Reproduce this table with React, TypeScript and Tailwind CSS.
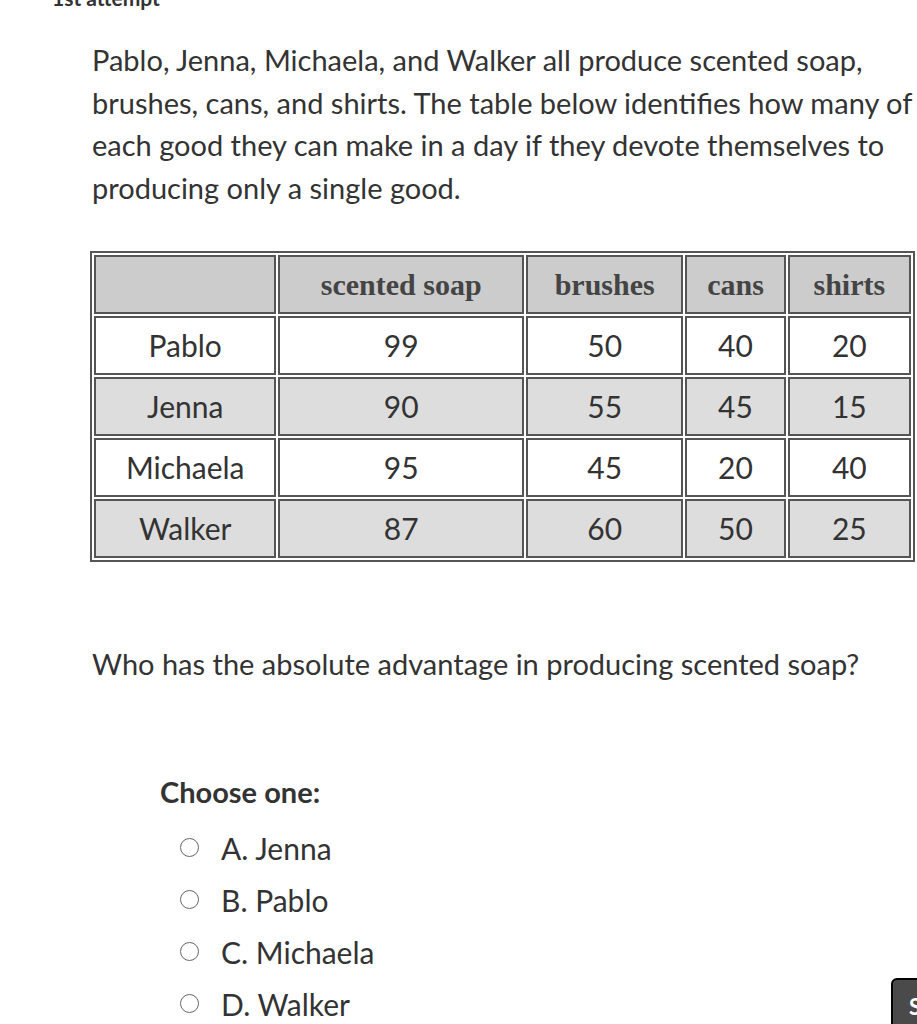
const headers = ["scented soap", "brushes", "cans", "shirts"];
const widths = ["w-[182px]", "w-[245px]", "w-[157px]", "w-[100px]", "w-[123px]"];

const rows: [string, number[]][] = [
  ["Pablo", [99, 50, 40, 20]],
  ["Jenna", [90, 55, 45, 15]],
  ["Michaela", [95, 45, 20, 40]],
  ["Walker", [87, 60, 50, 25]],
];

const options = ["A. Jenna", "B. Pablo", "C. Michaela", "D. Walker"];

export default function App() {
  return (
    <div className="relative w-[917px] h-[1024px] overflow-hidden bg-white text-[#333] font-['Lato','Liberation_Sans',sans-serif]">
      <div className="mt-[-16px] pl-[52px] text-[21px] leading-[28px] font-bold whitespace-nowrap">
        1st attempt
      </div>

      <p className="mt-[27px] ml-[92px] w-[850px] text-[29px] leading-[42.5px]">
        Pablo, Jenna, Michaela, and Walker all produce scented soap, brushes,
        cans, and shirts. The table below identifies how many of each good they
        can make in a day if they devote themselves to producing only a single
        good.
      </p>

      <table className="mt-[42px] ml-[90px] w-[825px] table-fixed border-separate border-spacing-[2px] border-2 border-[#555]">
        <thead>
          <tr>
            <th className={`${widths[0]} h-[59px] bg-[#ccc] border-2 border-[#555]`}></th>
            {headers.map((h, i) => (
              <th
                key={h}
                className={`${widths[i + 1]} h-[59px] bg-[#ccc] border-2 border-[#555] text-[30px] font-bold text-[#444] font-['Liberation_Serif',serif]`}
              >
                {h}
              </th>
            ))}
          </tr>
        </thead>
        <tbody>
          {rows.map(([name, vals], r) => (
            <tr key={name} className={r % 2 === 1 ? "bg-[#ddd]" : "bg-white"}>
              <td className="h-[59px] border-2 border-[#555] text-center text-[30px]">
                {name}
              </td>
              {vals.map((v, i) => (
                <td
                  key={i}
                  className="h-[59px] border-2 border-[#555] text-center text-[30px]"
                >
                  {v}
                </td>
              ))}
            </tr>
          ))}
        </tbody>
      </table>

      <p className="mt-[81px] ml-[92px] text-[29px] leading-[42.5px]">
        Who has the absolute advantage in producing scented soap?
      </p>

      <div className="mt-[90px] ml-[160px] text-[29px] font-bold leading-[32px]">
        Choose one:
      </div>

      <div className="mt-[24px] ml-[180px] flex flex-col gap-[20px]">
        {options.map((o) => (
          <label key={o} className="flex items-center gap-[22px] text-[30px] leading-[32px]">
            <span className="w-[19px] h-[19px] rounded-full border-[1.5px] border-[#666] bg-white" />
            <span>{o}</span>
          </label>
        ))}
      </div>

      <div className="absolute left-[891px] top-[978px] w-[60px] h-[60px] rounded-[6px] border-2 border-black bg-[#4a4a4a] pl-[16px] pt-[10px] text-white text-[22px] font-bold">
        S
      </div>
    </div>
  );
}
